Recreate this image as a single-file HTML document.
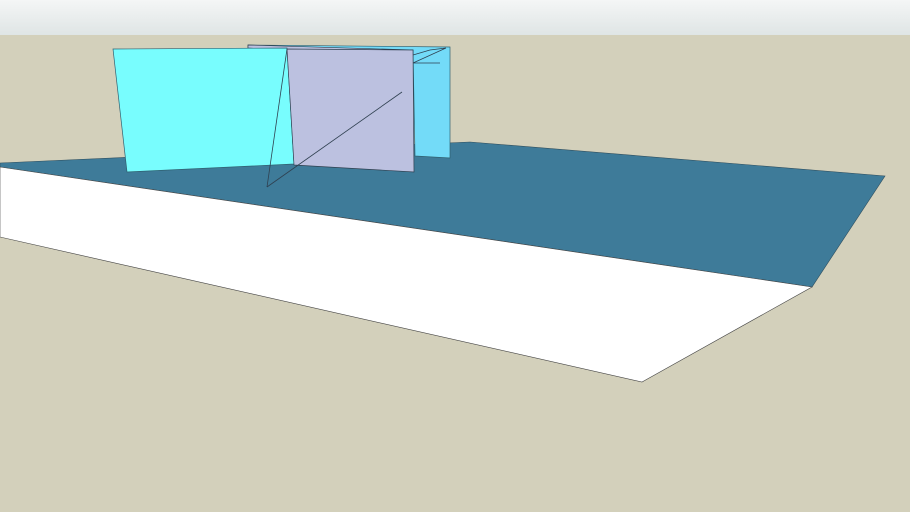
<!DOCTYPE html>
<html><head><style>html,body{margin:0;padding:0;overflow:hidden}svg{display:block}</style></head>
<body>
<svg width="910" height="512" viewBox="0 0 910 512" xmlns="http://www.w3.org/2000/svg">
<defs><linearGradient id="sky" x1="0" y1="0" x2="0" y2="1"><stop offset="0" stop-color="#f4f6f6"/><stop offset="1" stop-color="#dfe5e5"/></linearGradient></defs>
<rect width="910" height="512" fill="#d3d0bb"/>
<rect width="910" height="35" fill="url(#sky)"/>
<polygon points="0,163 470,142 885,176 812,287 0,167" fill="#3e7b99" stroke="#2f4f5f" stroke-width="0.6"/>
<polygon points="0,167 812,287 642,382 0,237" fill="#ffffff" stroke="#444" stroke-width="0.6"/>
<polygon points="248,45 450,47 450,158 415,156 413,50 248,48" fill="#73dbf8" stroke="#2f6070" stroke-width="0.7"/>
<polygon points="248,45 413,50 413,60 248,48" fill="#bcc1e0" stroke="#2f4050" stroke-width="0.7"/>
<polyline points="413,55 430,50 446,48 413,63 440,63" fill="none" stroke="#2f4050" stroke-width="0.7"/>
<polygon points="113,49 287,48 294,164 127,172" fill="#78fdfe" stroke="#2f6070" stroke-width="0.7"/>
<polygon points="287,49 413,50 414,172 294,165" fill="#bcc1e0" stroke="#2f4050" stroke-width="0.7"/>
<line x1="267" y1="187" x2="287" y2="49" stroke="#2f4050" stroke-width="0.8"/>
<line x1="267" y1="187" x2="402" y2="92" stroke="#2f4050" stroke-width="0.8"/>
</svg>
</body></html>
